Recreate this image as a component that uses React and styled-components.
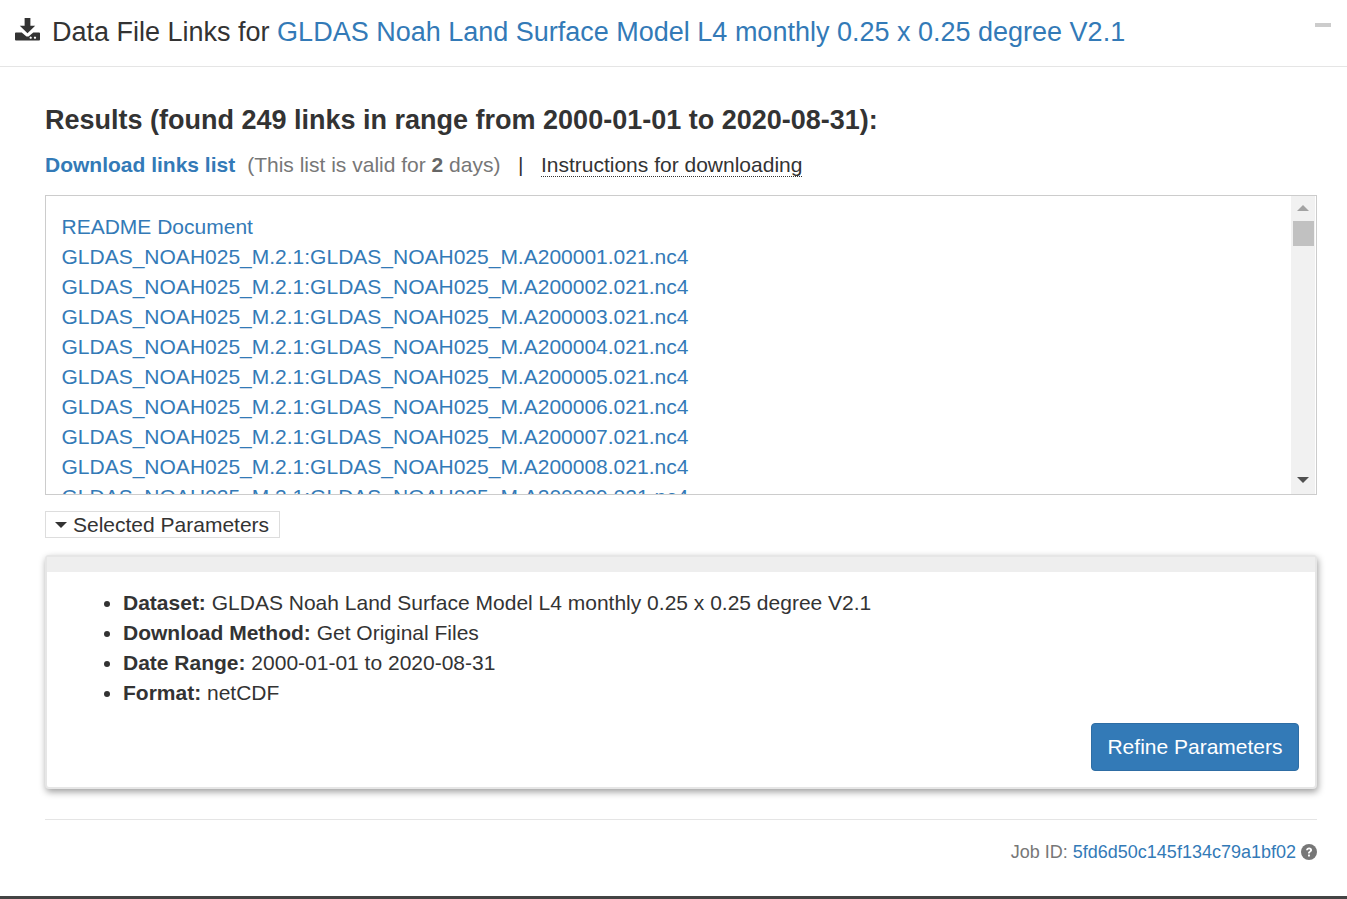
import React from "react";
import styled, { createGlobalStyle } from "styled-components";

const Global = createGlobalStyle`
  html, body { margin: 0; padding: 0; height: 899px; overflow: hidden; background: #444; }
  body { font-family: "Liberation Sans", Arial, sans-serif; color: #333; }
  * { box-sizing: border-box; }
  a { color: #337ab7; text-decoration: none; }
`;

const Modal = styled.div`
  height: 896px;
  background: #fff;
  display: flex;
  flex-direction: column;
`;
const Header = styled.header`
  height: 67px;
  flex: none;
  border-bottom: 1px solid #e5e5e5;
  display: flex;
  align-items: center;
  padding: 0 16px 4px 15px;
`;
const Title = styled.h4`
  margin: 0;
  flex: 1;
  display: flex;
  align-items: center;
  gap: 12px;
  font-size: 27px;
  font-weight: 400;
  line-height: 36px;
  white-space: nowrap;
`;
const TitleText = styled.span`
  padding-top: 2px;
`;
const TitleIcon = styled.svg`
  flex: none;
  margin-bottom: 3px;
`;
const Minimize = styled.span`
  width: 16px;
  height: 4px;
  background: #ccc;
  align-self: flex-start;
  margin-top: 23px;
`;
const Body = styled.main`
  padding: 35px 30px 0 45px;
  flex: 1;
`;
const Heading = styled.h3`
  margin: 0;
  font-size: 27px;
  line-height: 36px;
  font-weight: 700;
`;
const LinkRow = styled.div`
  margin-top: 12px;
  font-size: 21px;
  line-height: 30px;
  height: 30px;
  white-space: nowrap;
  display: flex;
  align-items: center;
`;
const StrongLink = styled.a`
  font-weight: 700;
  margin-right: 12px;
`;
const Muted = styled.span`
  color: #777;
  b { color: #666; }
`;
const Sep = styled.span`
  margin: 0 17.5px;
  color: #333;
`;
const Dotted = styled.a`
  color: #333;
  border-bottom: 1px dotted #333;
  line-height: 22px;
`;
const ListBox = styled.section`
  margin-top: 15px;
  height: 300px;
  border: 1px solid #ccc;
  display: flex;
  overflow: hidden;
`;
const FileList = styled.div`
  flex: 1;
  padding: 15.5px 16px 0 15.5px;
  font-size: 21px;
  line-height: 30px;
  overflow: hidden;
`;
const FileLink = styled.a`
  display: block;
  white-space: nowrap;
`;
const Track = styled.div`
  width: 24px;
  margin-right: 1px;
  flex: none;
  background: #f1f1f1;
  display: flex;
  flex-direction: column;
  align-items: center;
`;
const Arrow = styled.span`
  width: 0;
  height: 0;
  border-left: 6px solid transparent;
  border-right: 6px solid transparent;
  ${(p) =>
    p.$down
      ? "border-top: 6px solid #505050; margin-top: auto; margin-bottom: 11px;"
      : "border-bottom: 6px solid #a3a3a3; margin-top: 9px;"}
`;
const Thumb = styled.span`
  width: 21px;
  height: 25px;
  margin-top: 10px;
  background: #c1c1c1;
`;
const Toggle = styled.button`
  margin-top: 16px;
  display: flex;
  align-items: center;
  width: 235px;
  height: 27px;
  padding: 0 0 0 9px;
  background: #fff;
  border: 1px solid #ddd;
  font: inherit;
  font-size: 21px;
  color: #333;
  gap: 6px;
  white-space: nowrap;
`;
const Caret = styled.span`
  width: 0;
  height: 0;
  border-left: 6px solid transparent;
  border-right: 6px solid transparent;
  border-top: 6px solid #333;
`;
const Panel = styled.section`
  margin-top: 17px;
  height: 234px;
  border: 2px solid #e6e6e6;
  border-radius: 4px;
  background: #fff;
  box-shadow: 1px 3px 7px rgba(0, 0, 0, 0.38);
  display: flex;
  flex-direction: column;
`;
const PanelHead = styled.div`
  height: 15px;
  flex: none;
  background: #eee;
`;
const Params = styled.ul`
  margin: 16px 0 0;
  padding: 0 0 0 76px;
  font-size: 21px;
  line-height: 30px;
`;
const PanelFoot = styled.div`
  margin-top: auto;
  padding: 0 16px 16px 0;
  display: flex;
  justify-content: flex-end;
`;
const Button = styled.button`
  width: 208px;
  height: 48px;
  background: #337ab7;
  border: 1px solid #2e6da4;
  border-radius: 4px;
  color: #fff;
  font: inherit;
  font-size: 21px;
  padding: 0;
`;
const Rule = styled.hr`
  margin: 30px 0 0;
  border: 0;
  border-top: 1px solid #e5e5e5;
`;
const Footer = styled.footer`
  margin-top: 20px;
  display: flex;
  justify-content: flex-end;
  align-items: center;
  font-size: 18px;
  line-height: 24px;
  color: #777;
  gap: 5px;
`;

const Help = () => (
  <svg width="16" height="16" viewBox="0 0 24 24" aria-hidden="true">
    <circle cx="12" cy="12" r="12" fill="#777" />
    <path d="M7.6 9.2C7.9 6.6 9.7 5.2 12.2 5.2c2.6 0 4.400 1.500 4.400 3.700 0 1.600-.9 2.500-2.100 3.300-1 .7-1.200 1-1.200 2H10.500c0-1.900.5-2.600 1.700-3.400.9-.6 1.400-1 1.400-1.800 0-.8-.6-1.300-1.500-1.300-1 0-1.600.6-1.800 1.700z" fill="#fff" />
    <rect x="10.500" y="15.800" width="2.900" height="2.900" fill="#fff" />
  </svg>
);

const Download = () => (
  <TitleIcon width="25" height="23" viewBox="0 0 26 24" preserveAspectRatio="none" aria-hidden="true">
    <path fill="#333" d="M10 0h6v8h5l-8 8-8-8h5z" />
    <path fill="#333" fillRule="evenodd" d="M1 15h6l4 3.500a3 3 0 0 0 4 0L19 15h6a1 1 0 0 1 1 1v6.500a1 1 0 0 1-1 1H1a1 1 0 0 1-1-1V16a1 1 0 0 1 1-1zm16.500 5.500a1.200 1.200 0 1 0 0 .01zm4.500 0a1.200 1.200 0 1 0 0 .01z" />
  </TitleIcon>
);

const months = ["01", "02", "03", "04", "05", "06", "07", "08", "09"];

export default function App() {
  return (
    <>
      <Global />
      <Modal>
        <Header>
          <Title>
            <Download />
            <TitleText>
              Data File Links for{" "}
              <a href="#t">GLDAS Noah Land Surface Model L4 monthly 0.25 x 0.25 degree V2.1</a>
            </TitleText>
          </Title>
          <Minimize />
        </Header>
        <Body>
          <Heading>Results (found 249 links in range from 2000-01-01 to 2020-08-31):</Heading>
          <LinkRow>
            <StrongLink href="#d">Download links list</StrongLink>
            <Muted>
              (This list is valid for <b>2</b> days)
            </Muted>
            <Sep>|</Sep>
            <Dotted href="#i">Instructions for downloading</Dotted>
          </LinkRow>
          <ListBox>
            <FileList>
              <FileLink href="#r">README Document</FileLink>
              {months.map((m) => (
                <FileLink href="#f" key={m}>
                  {`GLDAS_NOAH025_M.2.1:GLDAS_NOAH025_M.A2000${m}.021.nc4`}
                </FileLink>
              ))}
            </FileList>
            <Track>
              <Arrow />
              <Thumb />
              <Arrow $down />
            </Track>
          </ListBox>
          <Toggle>
            <Caret />
            Selected Parameters
          </Toggle>
          <Panel>
            <PanelHead />
            <Params>
              <li><b>Dataset:</b> GLDAS Noah Land Surface Model L4 monthly 0.25 x 0.25 degree V2.1</li>
              <li><b>Download Method:</b> Get Original Files</li>
              <li><b>Date Range:</b> 2000-01-01 to 2020-08-31</li>
              <li><b>Format:</b> netCDF</li>
            </Params>
            <PanelFoot>
              <Button>Refine Parameters</Button>
            </PanelFoot>
          </Panel>
          <Rule />
          <Footer>
            <span>
              Job ID: <a href="#j">5fd6d50c145f134c79a1bf02</a>
            </span>
            <Help />
          </Footer>
        </Body>
      </Modal>
    </>
  );
}
